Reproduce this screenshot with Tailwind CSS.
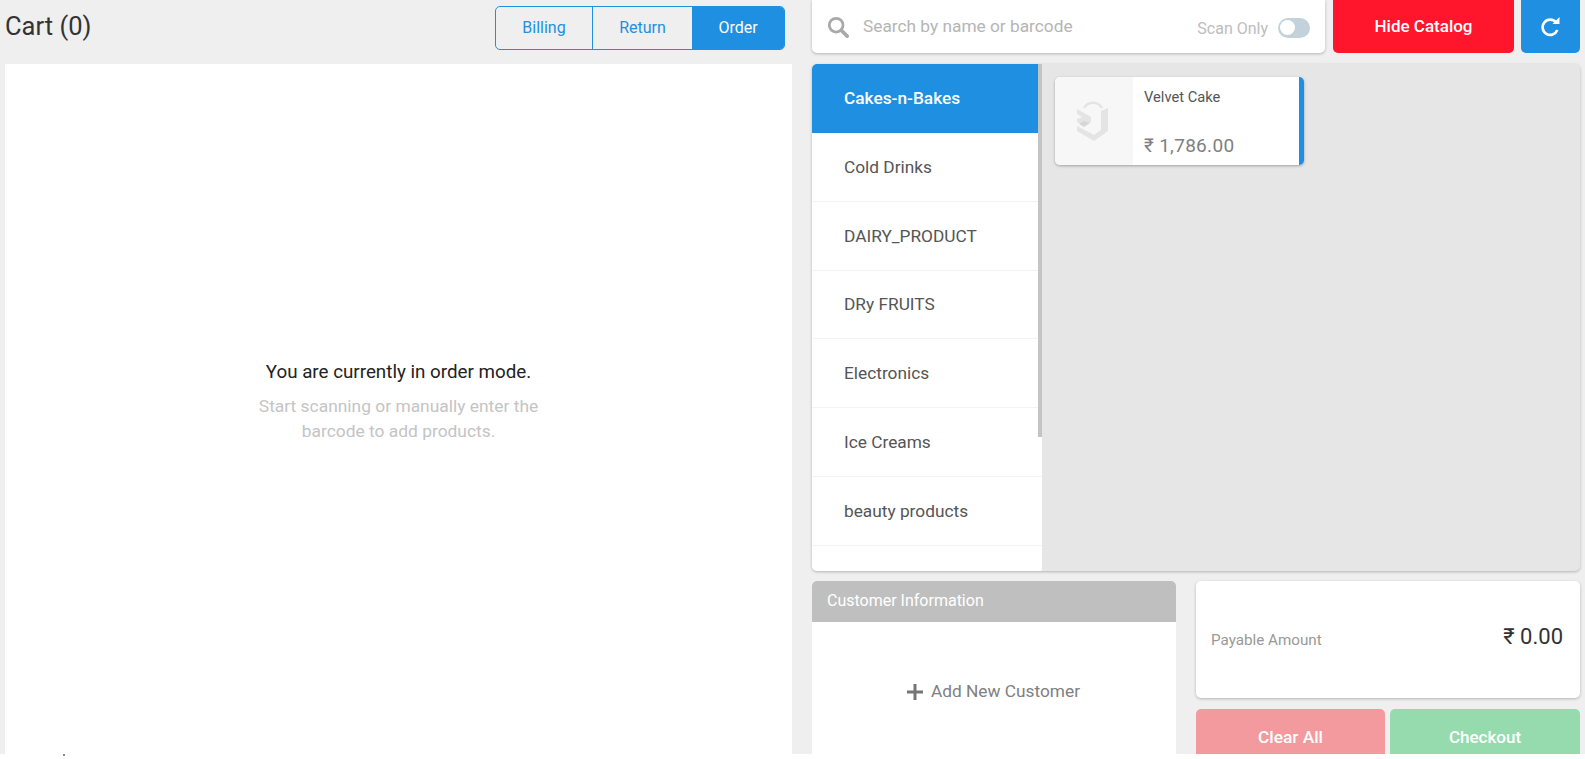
<!DOCTYPE html>
<html lang="en">
<head>
    <meta charset="UTF-8">
    <meta name="viewport" content="width=device-width, initial-scale=1.0">
    <title>Cart</title>
    <script src="https://cdn.jsdelivr.net/npm/@tailwindcss/browser@4"></script>
</head>
<body class="relative h-screen overflow-hidden bg-white font-['Roboto',sans-serif] text-[#333]">
    <div class="flex h-[754px] gap-[20px] overflow-hidden bg-[#efefef] pl-[5px]">
        <!-- cart -->
        <div class="flex w-[787px] flex-col">
            <div class="flex h-[64px] shrink-0 items-start justify-between pr-[7px]">
                <h2 class="text-[25.5px] leading-[52px] text-[#333]">Cart (0)</h2>
                <div class="mt-[6px] flex h-[44px] overflow-hidden rounded-[5px] border border-[#1e8fe1] text-[16px]">
                    <button class="w-[96px] text-[#1e8fe1]">Billing</button>
                    <button class="w-[100px] border-l border-[#1e8fe1] text-[#1e8fe1]">Return</button>
                    <button class="w-[92px] bg-[#1e8fe1] text-white">Order</button>
                </div>
            </div>
            <div class="flex flex-1 flex-col items-center bg-white pt-[296px] text-center">
                <p class="text-[18.8px] leading-[25px] text-[#222]">You are currently in order mode.</p>
                <p class="mt-[9px] w-[310px] text-[17.4px] leading-[25px] text-[#c4c4c4]">Start scanning or manually enter the barcode to add products.</p>
            </div>
        </div>

        <!-- right column -->
        <div class="flex w-[768px] flex-col">
            <div class="flex h-[53px] shrink-0">
                <div class="flex w-[513px] items-center rounded-b-[5px] bg-white px-[15px] shadow-[0_1px_3px_rgba(0,0,0,0.25)]">
                    <svg class="h-[22px] w-[22px]" viewBox="0 0 24 24" fill="none" stroke="#a9a9a9" stroke-width="3"><circle cx="10" cy="10" r="7.5"/><path d="M15.5 15.5L22 22" stroke-linecap="round" stroke-width="4"/></svg>
                    <span class="ml-[14px] text-[17.3px] text-[#b5b5b5]">Search by name or barcode</span>
                    <span class="ml-auto mt-[4px] text-[16px] text-[#bdbdbd]">Scan Only</span>
                    <span class="ml-[10px] mt-[2px] flex h-[20px] w-[32px] items-center rounded-full bg-[#c3d2da] pl-[2px]"><span class="h-[15px] w-[15px] rounded-full bg-white"></span></span>
                </div>
                <button class="ml-[8px] w-[181px] rounded-b-[5px] bg-[#ff162c] text-[17px] font-medium text-white">Hide Catalog</button>
                <button class="ml-[7px] flex w-[59px] items-center justify-center rounded-b-[5px] bg-[#1e8fe1]">
                    <svg class="mb-[2px] h-[24px] w-[24px]" viewBox="0 0 24 24" fill="none" stroke="#fff" stroke-width="2.6"><path d="M17 8.3A7.6 7.6 0 1 0 18.3 16"/><path d="M20.5 3v7h-7z" fill="#fff" stroke="none"/></svg>
                </button>
            </div>

            <!-- catalog -->
            <div class="mt-[11px] flex h-[507px] shrink-0 overflow-hidden rounded-[5px] bg-[#e6e6e6] shadow-[0_1px_3px_rgba(0,0,0,0.25)]">
                <div class="relative w-[230px] shrink-0 bg-white text-[17.3px] text-[#555]">
                    <div class="flex h-[69px] items-center bg-[#1e8fe1] pl-[32px] font-medium text-white">Cakes-n-Bakes</div>
                    <div class="flex h-[68.8px] items-center border-b border-[#f3f3f3] pl-[32px] pt-[3px]">Cold Drinks</div>
                    <div class="flex h-[68.8px] items-center border-b border-[#f3f3f3] pl-[32px] pt-[3px]">DAIRY_PRODUCT</div>
                    <div class="flex h-[68.8px] items-center border-b border-[#f3f3f3] pl-[32px] pt-[1px]">DRy FRUITS</div>
                    <div class="flex h-[68.8px] items-center border-b border-[#f3f3f3] pl-[32px] pt-[1px]">Electronics</div>
                    <div class="flex h-[68.8px] items-center border-b border-[#f3f3f3] pl-[32px] pt-[2px]">Ice Creams</div>
                    <div class="flex h-[68.8px] items-center border-b border-[#f3f3f3] pl-[32px] pt-[3px]">beauty products</div>
                    <div class="absolute right-0 top-0 h-[373px] w-[4px] bg-[#c4c4c4]"></div>
                </div>
                <div class="pl-[13px] pt-[13px]">
                    <div class="flex h-[88px] w-[249px] overflow-hidden rounded-[5px] border-r-[5px] border-[#1e8fe1] bg-white shadow-[0_1px_3px_rgba(0,0,0,0.3)]">
                        <div class="flex w-[78px] shrink-0 items-center justify-center bg-[#f7f7f7]">
                            <svg class="h-[56px] w-[50px]" viewBox="0 0 50 56" fill="#e4e4e4">
                                <path d="M15 15A10 9.5 0 0 1 33 15" fill="none" stroke="#e4e4e4" stroke-width="2.5"/>
                                <path d="M8 16L22 24V29L15 33L8 29V26L13 24L8 21z"/>
                                <path d="M15 28L21 30L15 34L10 31z" fill="#d6d6d6"/>
                                <path d="M8 33L25 42L32 37V18L39 15V38L25 48L8 38z"/>
                            </svg>
                        </div>
                        <div class="flex flex-1 flex-col justify-between pb-[5px] pl-[11px] pt-[9px]">
                            <span class="text-[14.7px] text-[#555]">Velvet Cake</span>
                            <span class="text-[19px] tracking-[0.3px] text-[#808080]">₹ 1,786.00</span>
                        </div>
                    </div>
                </div>
            </div>

            <!-- customer + totals -->
            <div class="mt-[10px] flex flex-1 gap-[20px]">
                <div class="w-[364px] rounded-t-[5px] bg-white">
                    <div class="flex h-[41px] items-center rounded-t-[5px] bg-[#bfbfbf] pb-[1px] pl-[15px] text-[16px] text-white">Customer Information</div>
                    <div class="flex h-[139px] items-center justify-center pr-[1px] pt-[1px] text-[17.3px] text-[#808080]">
                        <svg class="mr-[8px] h-[16px] w-[16px]" viewBox="0 0 16 16" fill="#757575"><path d="M6.5 0h3v6.5H16v3H9.5V16h-3V9.5H0v-3h6.5z"/></svg>
                        Add New Customer
                    </div>
                </div>
                <div class="flex flex-1 flex-col">
                    <div class="flex h-[117px] shrink-0 justify-between rounded-[5px] bg-white pl-[15px] pr-[17px] shadow-[0_1px_3px_rgba(0,0,0,0.25)]">
                        <span class="mt-[48px] text-[15.2px] text-[#999]">Payable Amount</span>
                        <span class="mt-[39px] text-[22px] text-[#333]">₹ 0.00</span>
                    </div>
                    <div class="mt-[11px] flex flex-1 gap-[5px]">
                        <button class="w-[189px] rounded-t-[5px] bg-[#f39a9f] pt-[5px] text-[17.3px] font-medium text-white">Clear All</button>
                        <button class="flex-1 rounded-t-[5px] bg-[#95dbae] pt-[5px] text-[17px] font-medium text-white">Checkout</button>
                    </div>
                </div>
            </div>
        </div>
    </div>
    <span class="absolute left-[63px] top-[754px] h-[2px] w-[2px] bg-[#888]"></span>
</body>
</html>
